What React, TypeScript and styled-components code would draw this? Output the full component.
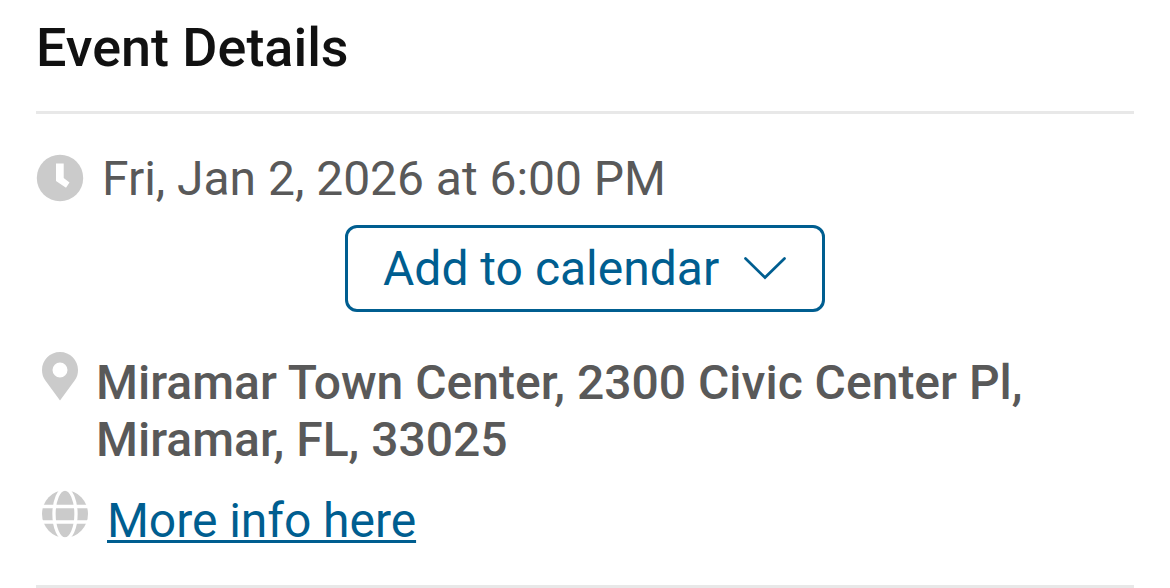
import styled, { createGlobalStyle } from 'styled-components';

const color = {
  title: '#111',
  text: '#595959',
  link: '#005e90',
  icon: '#cbcbcb',
  line: '#e8e8e8',
};

const GlobalStyle = createGlobalStyle`
  * {
    box-sizing: border-box;
  }

  body {
    margin: 0;
    background-color: #fff;
    font-family: Roboto, sans-serif;
    color: ${color.text};
  }
`;

const Container = styled.section`
  height: 588px;
  padding: 17px 36px 0;
  overflow: hidden;
`;

const Title = styled.h2`
  margin: 0;
  height: 94px;
  font-size: 53.9px;
  font-weight: 500;
  line-height: 62px;
  color: ${color.title};
`;

const Divider = styled.hr`
  margin: 0;
  border: none;
  height: 3px;
  background-color: ${color.line};
`;

const DateRow = styled.div`
  display: flex;
  gap: 18px;
  height: 56px;
  margin-top: 37px;
  padding-top: 3px;
`;

const DateText = styled.span`
  font-size: 48px;
  line-height: 50px;
  letter-spacing: -0.03px;
  white-space: nowrap;
`;

const CalendarButton = styled.button`
  display: flex;
  align-items: center;
  justify-content: space-between;
  width: 480px;
  height: 87px;
  margin: 18px auto 0;
  padding: 0 35px;
  border: 3px solid ${color.link};
  border-radius: 12px;
  background-color: #fff;
  color: ${color.link};
  font-family: inherit;
  font-size: 48px;
  white-space: nowrap;
`;

const AddressRow = styled.div`
  display: flex;
  gap: 18px;
  margin-top: 40px;
  padding-left: 6px;
`;

const Address = styled.address`
  padding-top: 2px;
  font-size: 48px;
  font-style: normal;
  font-weight: 500;
  line-height: 57px;
  white-space: nowrap;
`;

const LinkRow = styled.div`
  display: flex;
  gap: 19px;
  height: 95px;
  margin-top: 22px;
  padding-left: 6px;
`;

const Link = styled.a`
  padding-top: 3px;
  color: ${color.link};
  font-size: 48px;
  line-height: 56px;
  letter-spacing: -0.05px;
  text-decoration-thickness: 3px;
  text-underline-offset: 3px;
`;

const Icon = styled.svg`
  display: block;
  flex: none;
`;

function App() {
  return (
    <>
      <GlobalStyle />
      <Container>
        <Title>Event Details</Title>
        <Divider />
        <DateRow>
          <Icon width={48} height={48} viewBox="0 0 48 48">
            <circle cx="24" cy="24" r="23.2" fill={color.icon} />
            <path d="M20 9.5h7.7V24l5.8 4.5-3.5 5.3L20 27Z" fill="#fff" />
          </Icon>
          <DateText>Fri, Jan 2, 2026 at 6:00 PM</DateText>
        </DateRow>
        <CalendarButton type="button">
          Add to calendar
          <Icon width={44} height={26} viewBox="0 0 44 26">
            <path
              d="M2.5 2.5L22 21.5 41.5 2.5"
              fill="none"
              stroke={color.link}
              strokeWidth="2.7"
              strokeLinecap="round"
            />
          </Icon>
        </CalendarButton>
        <AddressRow>
          <Icon width={36} height={49} viewBox="0 0 36 49">
            <path
              fill={color.icon}
              fillRule="evenodd"
              d="M18 0C8 0 0 8 0 18c0 4 1 7 3 10l15 20.5L33 28c2-3 3-6 3-10C36 8 28 0 18 0Zm0 10.5a7.5 7.5 0 1 1 0 15 7.5 7.5 0 0 1 0-15Z"
            />
          </Icon>
          <Address>
            Miramar Town Center, 2300 Civic Center Pl,
            <br />
            Miramar, FL, 33025
          </Address>
        </AddressRow>
        <LinkRow>
          <Icon width={46} height={48} viewBox="0 0 46 48">
            <ellipse cx="23" cy="24" rx="23" ry="23.7" fill={color.icon} />
            <g fill="none" stroke="#fff" strokeWidth="3.3">
              <path d="M0 16.5h46M0 32h46" />
              <ellipse cx="23" cy="24" rx="11" ry="25" />
            </g>
          </Icon>
          <Link href="#">More info here</Link>
        </LinkRow>
        <Divider />
      </Container>
    </>
  );
}

export default App;
